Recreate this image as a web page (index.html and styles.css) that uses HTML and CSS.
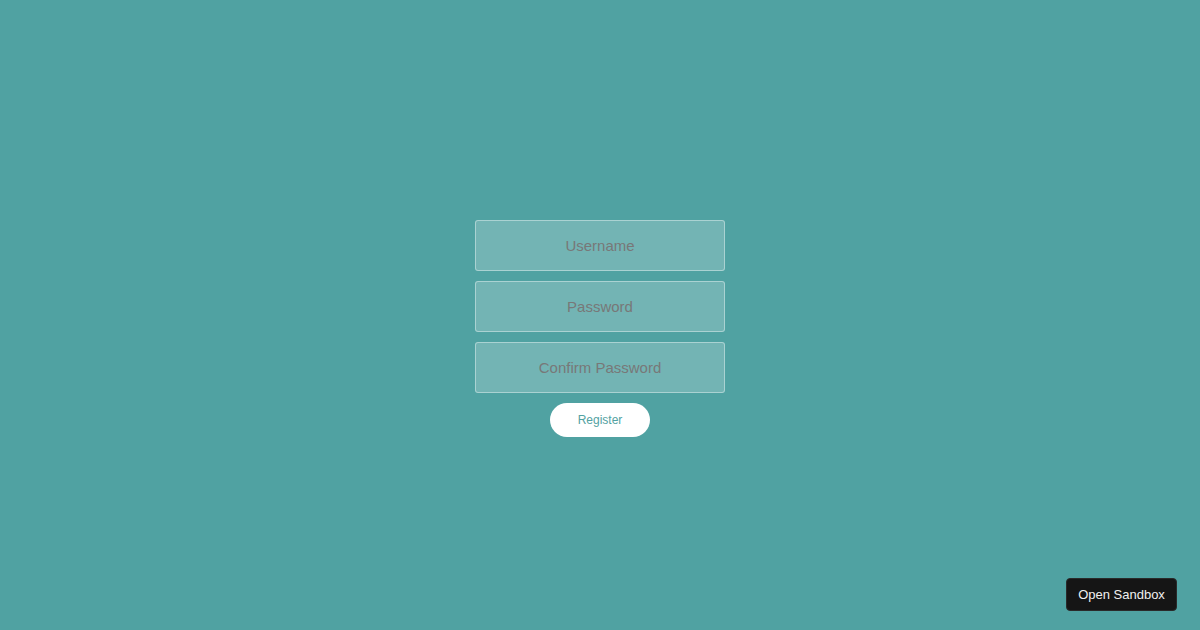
FILE: index.html
```html
<!DOCTYPE html>
<html>
<head>
<meta charset="utf-8">
<link rel="stylesheet" href="styles.css">
</head>
<body>
<div class="page">
  <form class="form">
    <input class="field" type="text" placeholder="Username">
    <input class="field" type="password" placeholder="Password">
    <input class="field" type="password" placeholder="Confirm Password">
    <button class="register" type="button">Register</button>
  </form>
</div>
<button class="sandbox" type="button">Open Sandbox</button>
</body>
</html>
```
FILE: styles.css
```css
html, body {
  margin: 0;
  padding: 0;
  height: 100%;
}
body {
  background: #50a2a2;
  font-family: "Liberation Sans", Arial, sans-serif;
  overflow: hidden;
}
.page {
  height: 630px;
  box-sizing: border-box;
  padding-top: 27px;
  display: flex;
  align-items: center;
  justify-content: center;
}
.form {
  display: flex;
  flex-direction: column;
  align-items: center;
  gap: 10px;
  margin: 0;
}
.field {
  width: 250px;
  height: 51px;
  box-sizing: border-box;
  border: 1px solid rgba(255, 255, 255, 0.4);
  border-radius: 3px;
  background: rgba(255, 255, 255, 0.2);
  text-align: center;
  font-family: "Liberation Sans", Arial, sans-serif;
  font-size: 15px;
  color: #fff;
  padding: 0 10px;
  outline: none;
  margin: 0;
}
.field::placeholder {
  color: #787878;
  opacity: 1;
}
.register {
  width: 100px;
  height: 34px;
  border: none;
  border-radius: 17px;
  background: #fff;
  color: #53a2a2;
  font-family: "Liberation Sans", Arial, sans-serif;
  font-size: 12px;
  padding: 0;
  margin: 0;
  cursor: pointer;
}
.sandbox {
  position: fixed;
  right: 23px;
  bottom: 19px;
  width: 111px;
  height: 33px;
  background: #151515;
  color: #f0f0f0;
  border: 1px solid #2a2a2a;
  border-radius: 4px;
  font-family: "Liberation Sans", Arial, sans-serif;
  font-size: 13px;
  padding: 0;
  box-sizing: border-box;
}
```
